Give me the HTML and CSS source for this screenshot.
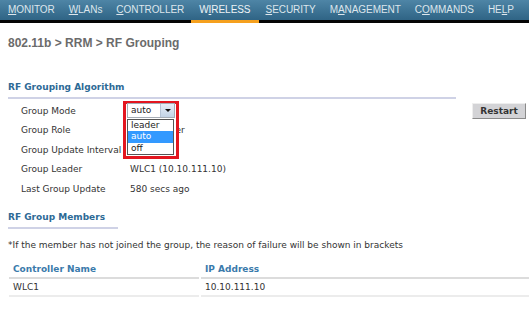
FILE: index.html
```
<!DOCTYPE html>
<html>
<head>
<meta charset="utf-8">
<link rel="stylesheet" href="styles.css">
</head>
<body>
<nav class="topnav">
  <span class="nav-item"><u>M</u>ONITOR</span>
  <span class="nav-item"><u>W</u>LANs</span>
  <span class="nav-item"><u>C</u>ONTROLLER</span>
  <span class="nav-item active">W<u>I</u>RELESS</span>
  <span class="nav-item"><u>S</u>ECURITY</span>
  <span class="nav-item">M<u>A</u>NAGEMENT</span>
  <span class="nav-item">C<u>O</u>MMANDS</span>
  <span class="nav-item">HE<u>L</u>P</span>
</nav>
<main class="content">
  <h1 class="crumb">802.11b &gt; RRM &gt; RF Grouping</h1>

  <h2 class="section-title wide">RF Grouping Algorithm</h2>
  <div class="algo">
    <div class="form">
      <div class="row">
        <span class="label">Group Mode</span>
        <span class="value sel-cell">
          <span class="select"><span class="sel-text">auto</span><span class="sel-btn"><span class="tri"></span></span></span>
          <span class="highlight">
            <span class="list">
              <span class="opt">leader</span>
              <span class="opt on">auto</span>
              <span class="opt">off</span>
            </span>
          </span>
        </span>
      </div>
      <div class="row"><span class="label">Group Role</span><span class="value">Auto Leader</span></div>
      <div class="row"><span class="label">Group Update Interval</span><span class="value">600 secs</span></div>
      <div class="row"><span class="label">Group Leader</span><span class="value">WLC1 (10.10.111.10)</span></div>
      <div class="row"><span class="label">Last Group Update</span><span class="value">580 secs ago</span></div>
    </div>
    <button class="btn">Restart</button>
  </div>

  <h2 class="section-title short">RF Group Members</h2>
  <p class="note">*If the member has not joined the group, the reason of failure will be shown in brackets</p>

  <div class="members">
    <div class="th">Controller Name</div>
    <div class="th">IP Address</div>
    <div class="td">WLC1</div>
    <div class="td">10.10.111.10</div>
  </div>
</main>
</body>
</html>
```
FILE: styles.css
```
html, body {
  margin: 0;
  padding: 0;
  background: #fff;
}
body {
  font-family: "DejaVu Sans", Verdana, sans-serif;
  font-size: 9px;
  color: #333;
  width: 529px;
  overflow: hidden;
}
.topnav {
  display: flex;
  height: 20px;
  background: linear-gradient(#4e85a6, #2f6485);
  border-bottom: 3px solid #050505;
  font-family: "Liberation Sans", Arial, sans-serif;
  font-size: 10px;
  line-height: 20px;
  letter-spacing: -0.05px;
}
.nav-item {
  padding: 0 7px;
  color: #dde6ec;
  white-space: nowrap;
}
.nav-item:first-child {
  padding-left: 8px;
}
.nav-item.active {
  margin-bottom: -3px;
  padding: 0 8px;
  border-bottom: 3px solid #f5a01e;
  color: #eef3f6;
}
.content {
  padding: 0 0 0 8px;
}
.crumb {
  margin: 13px 0 0;
  font-family: "Liberation Sans", Arial, sans-serif;
  font-size: 12px;
  line-height: 14px;
  font-weight: bold;
  color: #6b6b6b;
}
.section-title {
  margin: 0;
  font-size: 9px;
  line-height: 12px;
  font-weight: bold;
  color: #2d6a96;
  padding-bottom: 4px;
  border-bottom: 2px solid #cfd2e6;
}
.section-title.wide {
  margin-top: 31px;
  width: 448px;
}
.section-title.short {
  margin-top: 12px;
  width: 110px;
}
.algo {
  display: flex;
  align-items: flex-start;
  margin-top: 2px;
}
.form {
  flex: 1;
}
.row {
  display: flex;
  align-items: center;
  height: 19.5px;
}
.label {
  width: 106px;
  padding-left: 13px;
  white-space: nowrap;
}
.value {
  padding-left: 3px;
  white-space: nowrap;
}
.sel-cell {
  position: relative;
  padding-left: 0;
  height: 19.5px;
  display: flex;
  align-items: center;
}
.select {
  display: flex;
  width: 48px;
  height: 15px;
  box-sizing: border-box;
  border: 1px solid #a5acb5;
  background: #fff;
  position: relative;
  z-index: 3;
}
.sel-text {
  flex: 1;
  padding-left: 3px;
  line-height: 13px;
  color: #222;
}
.sel-btn {
  width: 13px;
  background: linear-gradient(#e6eef8, #c3d3e6);
  border-left: 1px solid #b6c4d6;
  display: flex;
  align-items: center;
  justify-content: center;
}
.tri {
  width: 0;
  height: 0;
  border-left: 3px solid transparent;
  border-right: 3px solid transparent;
  border-top: 3px solid #111;
}
.highlight {
  position: absolute;
  left: -4px;
  top: 0;
  width: 50px;
  height: 52px;
  border: 3px solid #e3161f;
  background: #fff;
  z-index: 2;
}
.list {
  position: absolute;
  left: 1px;
  top: 15px;
  width: 47px;
  height: 36px;
  box-sizing: border-box;
  border: 1px solid #555;
  background: #fff;
  display: flex;
  flex-direction: column;
}
.opt {
  height: 11.3px;
  line-height: 11px;
  padding-left: 3px;
  color: #222;
}
.opt.on {
  background: #3399ff;
  color: #fff;
}
.btn {
  margin-top: 2px;
  margin-right: 3px;
  width: 54px;
  height: 16px;
  padding: 0;
  font-family: "DejaVu Sans", Verdana, sans-serif;
  font-size: 9px;
  font-weight: bold;
  color: #333;
  background: #d3d3d6;
  border: 1px solid;
  border-color: #eee #8a8a8a #8a8a8a #eee;
}
.note {
  margin: 10px 0 0;
  font-size: 9px;
  line-height: 12px;
  color: #333;
}
.members {
  display: grid;
  grid-template-columns: 190px 1fr;
  column-gap: 2px;
  margin-top: 10px;
  margin-left: 1px;
}
.th {
  font-weight: bold;
  color: #3a7aab;
  height: 16px;
  line-height: 16px;
  padding-left: 4px;
  border-bottom: 2px solid #dcdcdc;
}
.td {
  height: 16px;
  line-height: 16px;
  padding-left: 4px;
  border-bottom: 2px solid #ececec;
}
```
